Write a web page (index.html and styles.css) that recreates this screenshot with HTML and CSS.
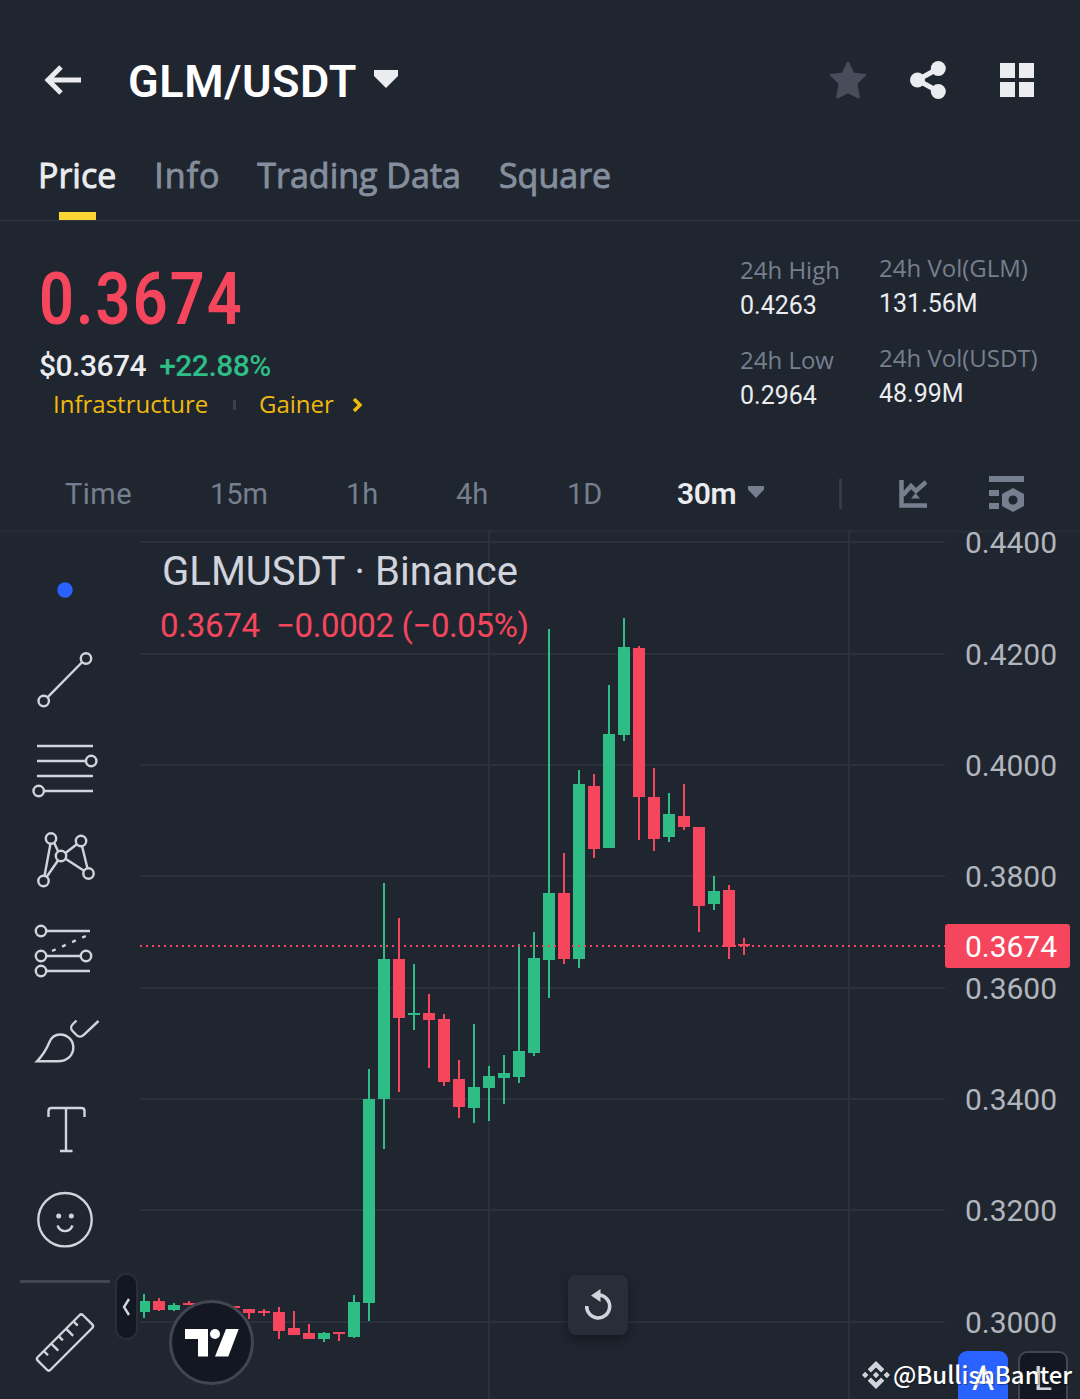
FILE: index.html
```html
<!DOCTYPE html>
<html lang="en">
<head>
    <meta charset="UTF-8">
    <meta name="viewport" content="width=device-width, initial-scale=1.0">
    <title>GLM/USDT</title>
    <link rel="stylesheet" href="styles.css">
</head>
<body>
    <header class="header">
        <svg class="back" width="38" height="30" viewBox="0 0 38 30"><path d="M17 2L4 15l13 13M4 15h33"/></svg>
        <h1>GLM/USDT</h1>
        <svg class="caret" width="24" height="18" viewBox="0 0 24 18"><path d="M0 0h24v6L12 18 0 6z"/></svg>
        <div class="actions">
            <svg width="38" height="40" viewBox="0 0 38 40"><path class="star" d="M19 2.500l5.200 11 12 1.500-8.800 8.400 2.400 14.100L19 32.200 8.200 37.500l2.400-14.100L1.800 15l12-1.500z"/></svg>
            <svg class="share" width="36" height="38" viewBox="0 0 36 38"><path d="M28.300 7.500L7.500 19l20.800 11.500"/><circle cx="28.300" cy="7.500" r="7.500"/><circle cx="7.500" cy="19" r="7.500"/><circle cx="28.300" cy="30.500" r="7.500"/></svg>
            <svg class="apps" width="34" height="34" viewBox="0 0 34 34"><path d="M0 0h15v15H0zM19 0h15v15H19zM0 19h15v15H0zM19 19h15v15H19z"/></svg>
        </div>
    </header>

    <nav class="tabs">
        <span class="tab active">Price</span>
        <span class="tab info">Info</span>
        <span class="tab">Trading Data</span>
        <span class="tab">Square</span>
    </nav>

    <section class="summary">
        <div class="price-box">
            <div class="price">0.3674</div>
            <div class="change"><span>$0.3674</span><span class="up">+22.88%</span></div>
            <div class="tags">
                <span class="tag-infra">Infrastructure</span>
                <i class="tag-line"></i>
                <span class="tag-gainer">Gainer</span>
                <svg width="10" height="16" viewBox="0 0 10 16"><path d="M2 2l6 6-6 6"/></svg>
            </div>
        </div>
        <div class="stats">
            <div class="stat"><span>24h High</span><b>0.4263</b></div>
            <div class="stat"><span>24h Low</span><b>0.2964</b></div>
        </div>
        <div class="stats vol">
            <div class="stat"><span>24h Vol(GLM)</span><b>131.56M</b></div>
            <div class="stat"><span>24h Vol(USDT)</span><b>48.99M</b></div>
        </div>
    </section>

    <div class="times">
        <span class="time">Time</span>
        <span>15m</span>
        <span>1h</span>
        <span>4h</span>
        <span>1D</span>
        <span class="selected">30m <svg width="16" height="12" viewBox="0 0 16 12"><path d="M0 0h16v3.500L8 12 0 3.500z"/></svg></span>
        <i class="times-line"></i>
        <svg class="chart-icon" width="28" height="28" viewBox="0 0 28 28"><path class="stroke" d="M2.500 0v25.500H28M4 15l8-9 5 5 10-9"/><path d="M16.500 13l4.500 5.500h-9z"/></svg>
        <svg width="36" height="36" viewBox="0 0 36 36"><path d="M0 0h35v6H0zM0 14h10v6H0zM0 27h10v6H0z"/><path fill-rule="evenodd" d="M24 12l11 6v12l-11 6-11-6V18zM24 19.500a4.500 4.500 0 1 0 .01 0z"/></svg>
    </div>

    <main class="chart">
        <aside class="tools">
            <svg viewBox="0 0 90 90"><circle class="dot" cx="45" cy="45" r="7.700"/></svg>
            <svg viewBox="0 0 90 90"><path d="M27.500 62.300L62.300 27"/><circle cx="23.700" cy="66" r="5.200"/><circle cx="66" cy="23.500" r="5.200"/></svg>
            <svg viewBox="0 0 90 90"><path d="M17 21h56M17 36h49M17 51h56M24 66h49"/><circle cx="71.200" cy="36" r="5.200"/><circle cx="18.700" cy="66" r="5.200"/></svg>
            <svg viewBox="0 0 90 90"><path d="M30.500 28.500l-6 32.500M34 27.500l4.200 9M38 45.500L26.700 61.700M45.500 38l11-8.500M62 31l5.500 22.500M45.500 43.700L64 55.700"/><circle cx="31" cy="23.500" r="5.200"/><circle cx="61" cy="26" r="5.200"/><circle cx="41" cy="41" r="5.200"/><circle cx="23.500" cy="66" r="5.200"/><circle cx="68.500" cy="58.500" r="5.200"/></svg>
            <svg viewBox="0 0 90 90"><path d="M26 26h44M26 51h35M26 66h44"/><path class="dots" d="M32 46L67 30.500"/><circle cx="21" cy="26" r="5.200"/><circle cx="21" cy="51" r="5.200"/><circle cx="66" cy="51" r="5.200"/><circle cx="21" cy="66" r="5.200"/></svg>
            <svg viewBox="0 0 90 90"><path d="M17 66.300C24 59 27 53 29.500 47 32 41 36 39.500 40 39.500c8 0 13.300 6 13.300 13 0 8-6.300 13.800-15.300 13.800zM56.500 25.500l-4 4c-2 2-1.500 5 0 6.500l4 4c2 2 5 2 7 0L78.500 26"/></svg>
            <svg viewBox="0 0 90 90"><path d="M28.500 32v-6q0-3 3-3h30q3 0 3 3v6M46 23v43M40 66h12.500"/></svg>
            <svg viewBox="0 0 90 90"><circle cx="45" cy="44.700" r="26.700"/><circle class="eye" cx="38.700" cy="41" r="2.500"/><circle class="eye" cx="51.300" cy="41" r="2.500"/><path d="M37.500 50.500c3 7.500 12 7.500 15 0"/></svg>
            <hr>
            <svg class="ruler" viewBox="0 0 90 90"><g transform="translate(45 44.500) rotate(-45)"><rect x="-32" y="-9" width="64" height="18" rx="2.500"/><path d="M-21-9v6M-10.500-9v10M0-9v6M10.500-9v10M21-9v6"/></g></svg>
            <div class="collapse"><svg width="9" height="20" viewBox="0 0 9 20"><path d="M7 2L2 10l5 8"/></svg></div>
        </aside>
        <div class="plot">
            <svg id="candles" width="940" height="869" viewBox="140 530 940 869">
                <text class="symbol" x="162" y="585" textLength="356">GLMUSDT · Binance</text>
                <text class="quote" x="160" y="637" textLength="100">0.3674</text>
                <text class="quote" x="276" y="637" textLength="253">−0.0002 (−0.05%)</text>
            </svg>
            <div class="tv-logo"><svg width="54" height="28" viewBox="0 0 54 28"><path d="M0 0h23v27.500H13V10H0zM41 0h12.700L43.300 27.500H30z"/><circle cx="30" cy="5" r="5"/></svg></div>
            <div class="reset"><svg width="28" height="32" viewBox="0 0 28 32"><path class="arc" d="M2.700 17A11.500 11.500 0 1 0 15.500 6"/><path d="M7 6.500L16.500 0v13z"/></svg></div>
            <div class="scale-btn auto">A</div>
            <div class="scale-btn log">L</div>
            <div class="watermark">
                <svg width="28" height="28" viewBox="0 0 28 28"><path d="M14 0l8.300 8.300-3.200 3.200L14 6.400l-5.100 5.100-3.200-3.200zM14 28l8.300-8.300-3.200-3.200L14 21.600l-5.100-5.100-3.200 3.200zM14 10.800l3.200 3.200-3.200 3.200-3.200-3.200zM3.200 10.800L6.400 14l-3.200 3.200L0 14zM24.800 10.800L28 14l-3.200 3.200-3.200-3.200z"/></svg>
                <span>@BullishBanter</span>
            </div>
        </div>
    </main>
<script src="script.js"></script>
</body>
</html>
```
FILE: styles.css
```css
*{
    margin: 0;
    padding: 0;
    box-sizing: border-box;
}
body{
    width: 1080px;
    height: 1399px;
    overflow: hidden;
    background-color: #202630;
    color: #eaecef;
    font-family: Roboto, "Liberation Sans", sans-serif;
}
svg{
    display: block;
    flex-shrink: 0;
}
.header{
    height: 148px;
    padding: 24px 46px 0 44px;
    display: flex;
    align-items: center;
}
.back{
    fill: none;
    stroke: #eaecef;
    stroke-width: 5;
    margin-bottom: 12px;
}
h1{
    width: 228px;
    margin: 0 18px 9px 46px;
    font-size: 45px;
    font-weight: 600;
    letter-spacing: .6px;
    color: #fff;
    white-space: nowrap;
}
.caret{
    fill: #eaecef;
    margin-bottom: 14px;
}
.actions{
    margin-left: auto;
    margin-bottom: 12px;
    display: flex;
    align-items: center;
    fill: #eaecef;
}
.star{
    fill: #474d5a;
    stroke: #474d5a;
    stroke-width: 2;
    stroke-linejoin: round;
}
.share{
    margin-left: 43px;
}
.share path{
    fill: none;
    stroke: #eaecef;
    stroke-width: 5;
}
.apps{
    margin-left: 54px;
}
.tabs{
    height: 73px;
    padding-left: 38px;
    display: flex;
    gap: 38px;
    border-bottom: 1px solid #333944;
}
.tab{
    height: 72px;
    line-height: 54px;
    font-family: "Open Sans", "Noto Sans", sans-serif;
    font-size: 34px;
    -webkit-text-stroke: .9px;
    color: #848e9c;
    white-space: nowrap;
}
.tab.info{
    width: 65px;
    letter-spacing: 1px;
}
.tab.active{
    color: #eaecef;
    display: flex;
    flex-direction: column;
    align-items: center;
    justify-content: space-between;
}
.tab.active::after{
    content: "";
    width: 37px;
    height: 8px;
    background-color: #fcd535;
}
.summary{
    height: 239px;
    padding: 34px 0 0 39px;
    display: flex;
}
.price-box{
    width: 701px;
}
.price{
    width: 300px;
    height: 88px;
    line-height: 90px;
    font-size: 72px;
    font-weight: 600;
    letter-spacing: 2.5px;
    color: #f6465d;
    transform: scaleX(.85);
    transform-origin: left;
}
.change{
    height: 44px;
    line-height: 45px;
    display: flex;
    gap: 13px;
    font-size: 30px;
    font-weight: 500;
    letter-spacing: -.5px;
}
.up{
    color: #2ebd85;
}
.tags{
    height: 36px;
    padding-left: 14px;
    display: flex;
    align-items: center;
    font-family: "Open Sans", "Noto Sans", sans-serif;
    font-size: 24px;
    line-height: 32px;
    color: #f0b90b;
}
.tag-infra,
.tag-gainer{
    margin-bottom: 3px;
}
.tag-infra{
    width: 180px;
}
.tag-line{
    width: 3px;
    height: 10px;
    background-color: #3a414c;
}
.tag-gainer{
    width: 93px;
    margin-left: 23px;
}
.tags svg{
    fill: none;
    stroke: #f0b90b;
    stroke-width: 3.5;
}
.stats{
    width: 139px;
}
.vol{
    width: 190px;
    margin-top: -2px;
}
.stat{
    height: 90px;
    display: flex;
    flex-direction: column;
    white-space: nowrap;
}
.stat span{
    height: 33px;
    line-height: 29px;
    font-family: "Open Sans", "Noto Sans", sans-serif;
    font-size: 24px;
    color: #767f8d;
}
.stat b{
    line-height: 36px;
    font-size: 25px;
    font-weight: 400;
}
.times{
    height: 70px;
    padding: 0 0 3px 65px;
    display: grid;
    grid-template-columns: 145px 136px 110px 111px 110px 162px 60px 90px 36px;
    align-items: center;
    font-size: 29px;
    color: #767f8d;
    fill: #767f8d;
}
.time{
    letter-spacing: .5px;
}
.selected{
    display: flex;
    align-items: center;
    gap: 12px;
    font-size: 30px;
    letter-spacing: -.4px;
    font-weight: 600;
    color: #eaecef;
}
.selected svg{
    margin-bottom: 3px;
}
.times-line{
    width: 3px;
    height: 30px;
    background-color: #343b46;
}
.chart-icon .stroke{
    fill: none;
    stroke: #767f8d;
    stroke-width: 4.5;
}
.chart{
    height: 869px;
    display: flex;
    border-top: 3px solid #252b35;
}
.tools{
    position: relative;
    width: 140px;
    padding: 12px 0 0 20px;
    fill: none;
    stroke: #d1d4dc;
    stroke-width: 2.4;
}
.tools > svg{
    width: 90px;
    height: 90px;
}
.tools .dot{
    fill: #2962ff;
    stroke: none;
}
.tools .eye{
    fill: #d1d4dc;
    stroke: none;
}
.dots{
    stroke-dasharray: 4 7;
}
.tools hr{
    width: 90px;
    height: 3px;
    margin-top: 15px;
    border: none;
    background-color: #434651;
}
.tools .ruler{
    margin-top: 15px;
}
.collapse{
    position: absolute;
    left: 115px;
    top: 740px;
    width: 23px;
    height: 67px;
    display: flex;
    align-items: center;
    justify-content: center;
    background-color: #131722;
    border: 2px solid #2a2e39;
    border-radius: 11px;
}
.plot{
    position: relative;
    width: 940px;
    height: 869px;
    margin-top: -3px;
}
.grid{
    stroke: #2b313b;
    stroke-width: 2;
}
.green{
    fill: #2ebd85;
}
.red{
    fill: #f6465d;
}
.last-line{
    stroke: #f6465d;
    stroke-width: 2;
    stroke-dasharray: 2 4;
}
.axis{
    font-size: 30px;
    fill: #b2b5be;
}
.axis.last{
    fill: #fff;
}
.symbol{
    font-size: 40px;
    fill: #d1d4dc;
}
.quote{
    font-size: 33px;
    fill: #f6465d;
}
.tv-logo{
    position: absolute;
    left: 29px;
    top: 770px;
    width: 85px;
    height: 85px;
    display: flex;
    align-items: center;
    justify-content: center;
    background-color: #131722;
    border: 3px solid #434651;
    border-radius: 50%;
    fill: #fff;
}
.reset{
    position: absolute;
    left: 428px;
    top: 745px;
    width: 60px;
    height: 60px;
    display: flex;
    align-items: center;
    justify-content: center;
    background-color: #272e38;
    border-radius: 8px;
    box-shadow: 0 4px 12px rgba(10, 13, 20, 0.6);
    fill: #d1d4dc;
}
.arc{
    fill: none;
    stroke: #d1d4dc;
    stroke-width: 3.5;
}
.scale-btn{
    position: absolute;
    top: 821px;
    width: 50px;
    height: 48px;
    line-height: 54px;
    border-radius: 9px 9px 0 0;
    text-align: center;
    font-size: 34px;
    color: #d1d4dc;
}
.auto{
    left: 818px;
    background-color: #2962ff;
    color: #fff;
}
.log{
    left: 878px;
    line-height: 50px;
    background-color: #131722;
    border: 2px solid #434651;
    border-bottom: none;
}
.watermark{
    position: absolute;
    left: 722px;
    top: 825px;
    height: 40px;
    display: flex;
    align-items: center;
    gap: 3px;
    font-family: "Noto Sans CJK SC", sans-serif;
    font-size: 24px;
    line-height: 36px;
    font-weight: 500;
    color: #fff;
    fill: #d1d4dc;
    text-shadow: 1px 1px 1px rgba(0, 0, 0, 0.4);
}
.watermark span{
    margin-bottom: 3px;
}
```
FILE: script.js
```js
const svg = document.querySelector("#candles");

// x, body top, body bottom, high, low, colour
const candles = [
    [144, 1301, 1312, 1294, 1318, "green"],
    [159, 1301, 1310, 1298, 1311, "red"],
    [174, 1305, 1310, 1303, 1311, "green"],
    [189, 1303, 1305, 1301, 1305, "red"],
    [234, 1306, 1308, 1306, 1308, "red"],
    [249, 1309, 1313, 1309, 1319, "red"],
    [264, 1311, 1313, 1309, 1316, "red"],
    [279, 1312, 1331, 1307, 1339, "red"],
    [294, 1328, 1335, 1311, 1335, "red"],
    [309, 1333, 1339, 1324, 1339, "red"],
    [324, 1333, 1339, 1332, 1342, "green"],
    [339, 1332, 1334, 1332, 1341, "red"],
    [354, 1302, 1337, 1295, 1338, "green"],
    [369, 1099, 1303, 1069, 1321, "green"],
    [384, 959, 1099, 883, 1149, "green"],
    [399, 959, 1018, 918, 1092, "red"],
    [414, 1013, 1015, 964, 1030, "green"],
    [429, 1013, 1020, 994, 1068, "red"],
    [444, 1019, 1082, 1014, 1086, "red"],
    [459, 1079, 1107, 1060, 1118, "red"],
    [474, 1087, 1108, 1024, 1123, "green"],
    [489, 1076, 1088, 1066, 1121, "green"],
    [504, 1073, 1078, 1055, 1104, "green"],
    [519, 1051, 1077, 944, 1083, "green"],
    [534, 958, 1053, 932, 1056, "green"],
    [549, 893, 960, 629, 998, "green"],
    [564, 893, 959, 853, 964, "red"],
    [579, 784, 959, 770, 968, "green"],
    [594, 786, 849, 774, 858, "red"],
    [609, 734, 848, 685, 848, "green"],
    [624, 647, 735, 618, 741, "green"],
    [639, 648, 797, 646, 840, "red"],
    [654, 797, 839, 768, 851, "red"],
    [669, 814, 837, 793, 842, "green"],
    [684, 816, 827, 784, 830, "red"],
    [699, 827, 906, 827, 932, "red"],
    [714, 891, 904, 876, 910, "green"],
    [729, 890, 947, 885, 959, "red"],
    [744, 944, 946, 938, 955, "red"],
];
const prices = [
    ["0.4400", 542], ["0.4200", 654], ["0.4000", 765], ["0.3800", 876],
    ["0.3600", 988], ["0.3400", 1099], ["0.3200", 1210], ["0.3000", 1322],
];

let grid = "";
let shapes = "";
for (let x of [489, 849]) {
    grid += `<path class="grid" d="M${x} 530V1399"/>`;
}
for (let [label, y] of prices) {
    grid += `<path class="grid" d="M140 ${y}H945"/>`;
    shapes += `<text class="axis" x="965" y="${y + 11}" textLength="92">${label}</text>`;
}
for (let [x, top, bottom, high, low, color] of candles) {
    shapes += `<rect class="${color}" x="${x - 1}" y="${high}" width="2" height="${low - high}"/>`;
    shapes += `<rect class="${color}" x="${x - 6}" y="${top}" width="12" height="${bottom - top}"/>`;
}
shapes += `<path class="last-line" d="M140 946H945"/>`;
shapes += `<rect class="red" x="945" y="924" width="125" height="44" rx="3"/>`;
shapes += `<text class="axis last" x="965" y="957" textLength="92">0.3674</text>`;
svg.insertAdjacentHTML("afterbegin", grid + shapes);
```
